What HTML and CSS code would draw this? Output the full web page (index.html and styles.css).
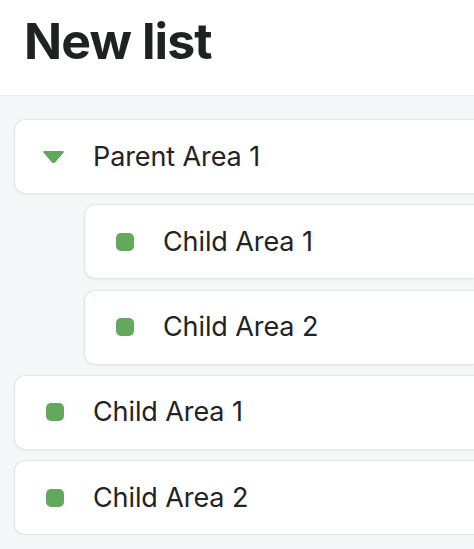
FILE: index.html
```html
<!DOCTYPE html>
<html>
<head>
<meta charset="utf-8">
<link rel="stylesheet" href="styles.css">
</head>
<body>
<header class="header">
  <h1 class="title">New list</h1>
</header>
<main class="area">
  <ul class="list">
    <li class="card">
      <svg class="caret" width="23" height="14" viewBox="0 0 23 14"><path d="M2.6 1 H20.4 Q22.8 1 21.2 3 L13.2 12.3 Q11.5 14 9.8 12.3 L1.8 3 Q0.2 1 2.6 1 Z" fill="#5fa85a"/></svg>
      <span class="label">Parent Area 1</span>
    </li>
    <li class="card child">
      <span class="dot"></span>
      <span class="label">Child Area 1</span>
    </li>
    <li class="card child">
      <span class="dot"></span>
      <span class="label">Child Area 2</span>
    </li>
    <li class="card">
      <span class="dot"></span>
      <span class="label">Child Area 1</span>
    </li>
    <li class="card">
      <span class="dot"></span>
      <span class="label">Child Area 2</span>
    </li>
  </ul>
</main>
</body>
</html>
```
FILE: styles.css
```css
html, body {
  margin: 0;
  padding: 0;
  background: #f6f7f9;
  overflow: hidden;
  font-family: Inter, "Noto Sans", sans-serif;
  color: #222324;
}
.header {
  background: #ffffff;
  height: 96px;
  padding-left: 24px;
  box-sizing: border-box;
  border-bottom: 1px solid #eceef1;
}
.title {
  margin: 0;
  padding-top: 11px;
  font-size: 50px;
  font-weight: 700;
  letter-spacing: -0.9px;
  line-height: 60px;
  color: #1f2122;
}
.area {
  padding: 23px 0 0 14px;
}
.list {
  list-style: none;
  margin: 0;
  padding: 0;
  display: flex;
  flex-direction: column;
  gap: 10.3px;
}
.card {
  display: flex;
  align-items: center;
  height: 75px;
  box-sizing: border-box;
  background: #ffffff;
  border: 1px solid #e3e5e8;
  border-right: none;
  border-radius: 11px 0 0 11px;
  box-shadow: 0 1px 3px rgba(0, 0, 0, 0.05);
  padding-left: 27px;
}
.card.child {
  margin-left: 70px;
}
.caret {
  display: block;
  width: 23px;
  height: 14px;
  margin-right: 28px;
}
.dot {
  display: block;
  width: 18px;
  height: 18px;
  border-radius: 5px;
  background: #63a95d;
  margin-left: 4px;
  margin-right: 29px;
}
.label {
  font-size: 27px;
  font-weight: 400;
  line-height: 32px;
  letter-spacing: -0.1px;
  color: #222324;
}
```
